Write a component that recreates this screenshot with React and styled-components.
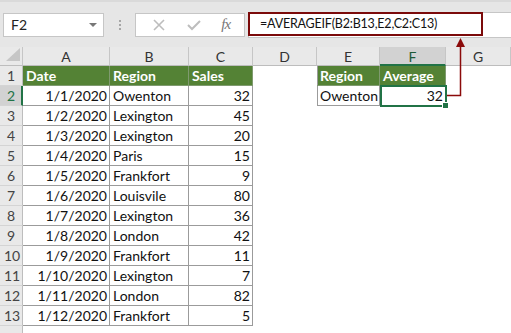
import React from 'react';
import styled, { createGlobalStyle, css } from 'styled-components';

const GlobalStyle = createGlobalStyle`
  html, body { margin: 0; padding: 0; background: #fff; }
  body { font-family: Lato, "Liberation Sans", sans-serif; }
`;

const GREEN = '#217346';
const COLS = '23px 87px 79px 64px 64px 63px 66px 65px';

const Window = styled.div`
  position: relative;
  width: 511px;
  height: 333px;
  overflow: hidden;
  background: #fff;
`;

const Toolbar = styled.div`
  display: flex;
  align-items: center;
  height: 47px;
  padding: 0 0 0 3px;
  box-sizing: border-box;
  background: #e6e6e6;
  border-top: 2px solid #dadada;
`;

const NameBox = styled.div`
  display: flex;
  align-items: center;
  justify-content: space-between;
  width: 101px;
  height: 24px;
  box-sizing: border-box;
  padding: 0 6px 0 7px;
  background: #fff;
  border: 1px solid #c6c6c6;
  font-size: 14px;
  color: #222;
`;

const Caret = styled.span`
  width: 0;
  height: 0;
  border-left: 4px solid transparent;
  border-right: 4px solid transparent;
  border-top: 4px solid #777;
`;

const Grip = styled.div`
  width: 31px;
  display: flex;
  flex-direction: column;
  align-items: center;
  gap: 2px;
  span {
    width: 2px;
    height: 2px;
    background: #a6a6a6;
  }
`;

const FxButtons = styled.div`
  display: flex;
  align-items: center;
  justify-content: space-around;
  width: 110px;
  height: 24px;
  box-sizing: border-box;
  padding: 0 4px 0 6px;
  background: #fff;
  border: 1px solid #c6c6c6;
  margin-right: 3px;
`;

const Fx = styled.span`
  font-family: "Liberation Serif", serif;
  font-style: italic;
  font-size: 15px;
  color: #777;
  letter-spacing: -1px;
`;

const FormulaField = styled.div`
  flex: 1;
  height: 24px;
  background: #fff;
  border: 1px solid #c6c6c6;
  border-right: none;
  display: flex;
`;

const Formula = styled.div`
  width: 235px;
  height: 24px;
  margin: -1px 0 0 -1px;
  box-sizing: border-box;
  border: 2px solid #7b0a0a;
  padding-left: 10px;
  font-size: 12.5px;
  letter-spacing: -0.2px;
  line-height: 20px;
  color: #111;
`;

const Sheet = styled.div`
  display: grid;
  grid-template-columns: ${COLS};
  grid-auto-rows: 20px;
  grid-template-rows: 19px;
`;

const Corner = styled.div`
  position: relative;
  background: #e9e9e9;
  border-right: 1px solid #c6c6c6;
  border-bottom: 1px solid #bdbdbd;
  box-sizing: border-box;
  &::after {
    content: '';
    position: absolute;
    right: 2px;
    bottom: 4px;
    width: 14px;
    height: 13px;
    background: #c6c6c6;
    clip-path: polygon(100% 0, 100% 100%, 0 100%);
  }
`;

const ColHead = styled.div`
  background: ${p => (p.$active ? '#d2d2d2' : '#e9e9e9')};
  border-right: 1px solid #c6c6c6;
  border-bottom: ${p => (p.$active ? `2px solid ${GREEN}` : '1px solid #bdbdbd')};
  box-sizing: border-box;
  text-align: center;
  font-size: 14px;
  line-height: 19px;
  color: ${p => (p.$active ? '#1d5a38' : '#333')};
`;

const RowHead = styled.div`
  background: ${p => (p.$active ? '#d2d2d2' : '#e9e9e9')};
  border-right: ${p => (p.$active ? `2px solid ${GREEN}` : '1px solid #bdbdbd')};
  border-bottom: 1px solid #d4d4d4;
  box-sizing: border-box;
  padding-left: ${p => (p.$n >= 10 ? 4 : 7)}px;
  font-size: 14px;
  line-height: 20px;
  color: ${p => (p.$active ? GREEN : '#444')};
`;

const Cell = styled.div`
  position: relative;
  box-sizing: border-box;
  padding: 0 3px;
  font-size: 14px;
  line-height: 20px;
  white-space: nowrap;
  overflow: visible;
  color: #111;
  text-align: ${p => (p.$right ? 'right' : 'left')};
  ${p => p.$kind === 'head' && css`
    background: #548235;
    color: #fff;
    font-weight: 700;
    box-shadow: inset -1px -1px 0 #7f9a6f${p.$first ? ', inset 1px 0 0 #9b9b9b' : ''};
  `}
  ${p => p.$kind === 'data' && css`
    box-shadow: inset -1px -1px 0 #9b9b9b${p.$first ? ', inset 1px 0 0 #9b9b9b' : ''};
  `}
  ${p => p.$selected && css`
    &::before {
      content: '';
      position: absolute;
      left: 0;
      top: -1px;
      right: -1px;
      bottom: -1px;
      border: 2px solid ${GREEN};
    }
    &::after {
      content: '';
      position: absolute;
      right: -3px;
      bottom: -3px;
      width: 5px;
      height: 5px;
      background: ${GREEN};
      border: 1px solid #fff;
    }
  `}
`;

const Arrow = styled.svg`
  position: absolute;
  left: 0;
  top: 0;
  pointer-events: none;
`;

const data = [
  ['1/1/2020', 'Owenton', 32],
  ['1/2/2020', 'Lexington', 45],
  ['1/3/2020', 'Lexington', 20],
  ['1/4/2020', 'Paris', 15],
  ['1/5/2020', 'Frankfort', 9],
  ['1/6/2020', 'Louisvile', 80],
  ['1/7/2020', 'Lexington', 36],
  ['1/8/2020', 'London', 42],
  ['1/9/2020', 'Frankfort', 11],
  ['1/10/2020', 'Lexington', 7],
  ['1/11/2020', 'London', 82],
  ['1/12/2020', 'Frankfort', 5],
];

const letters = ['A', 'B', 'C', 'D', 'E', 'F', 'G'];

const cellFor = (row, col) => {
  if (row === 1) {
    if (col === 0) return { kind: 'head', text: 'Date' };
    if (col === 1) return { kind: 'head', text: 'Region' };
    if (col === 2) return { kind: 'head', text: 'Sales' };
    if (col === 4) return { kind: 'head', text: 'Region', first: true };
    if (col === 5) return { kind: 'head', text: 'Average' };
    return {};
  }
  const d = data[row - 2];
  if (d && col === 0) return { kind: 'data', text: d[0], right: true };
  if (d && col === 1) return { kind: 'data', text: d[1] };
  if (d && col === 2) return { kind: 'data', text: d[2], right: true };
  if (row === 2 && col === 4) return { kind: 'data', text: 'Owenton', first: true };
  if (row === 2 && col === 5) return { kind: 'data', text: 32, right: true, selected: true };
  return {};
};

const App = () => {
  const rows = Array.from({ length: 14 }, (_, i) => i + 1);
  return (
    <Window>
      <GlobalStyle />
      <Toolbar>
        <NameBox>
          <span>F2</span>
          <Caret />
        </NameBox>
        <Grip><span /><span /><span /></Grip>
        <FxButtons>
          <svg width="14" height="14" viewBox="0 0 14 14">
            <path d="M2 2 L12 12 M12 2 L2 12" stroke="#bdbdbd" strokeWidth="1.6" fill="none" />
          </svg>
          <svg width="16" height="14" viewBox="0 0 16 14">
            <path d="M2 7 L6 11 L14 3" stroke="#bdbdbd" strokeWidth="2" fill="none" />
          </svg>
          <Fx>fx</Fx>
        </FxButtons>
        <FormulaField>
          <Formula>=AVERAGEIF(B2:B13,E2,C2:C13)</Formula>
        </FormulaField>
      </Toolbar>
      <Sheet>
        <Corner />
        {letters.map(l => (
          <ColHead key={l} $active={l === 'F'}>{l}</ColHead>
        ))}
        {rows.map(r => (
          <React.Fragment key={r}>
            <RowHead $n={r} $active={r === 2}>{r < 14 ? r : ''}</RowHead>
            {letters.map((l, c) => {
              const cell = cellFor(r, c);
              return (
                <Cell
                  key={l}
                  $kind={cell.kind}
                  $right={cell.right}
                  $first={cell.first}
                  $selected={cell.selected}
                >
                  {cell.text}
                </Cell>
              );
            })}
          </React.Fragment>
        ))}
      </Sheet>
      <Arrow width="511" height="333" viewBox="0 0 511 333">
        <path d="M460.5 44 V95.5 H447" stroke="#8b0a0a" strokeWidth="1.5" fill="none" />
        <path d="M456 47 L460.5 38 L465 47 Z" fill="#8b0a0a" />
      </Arrow>
    </Window>
  );
};

export default App;
